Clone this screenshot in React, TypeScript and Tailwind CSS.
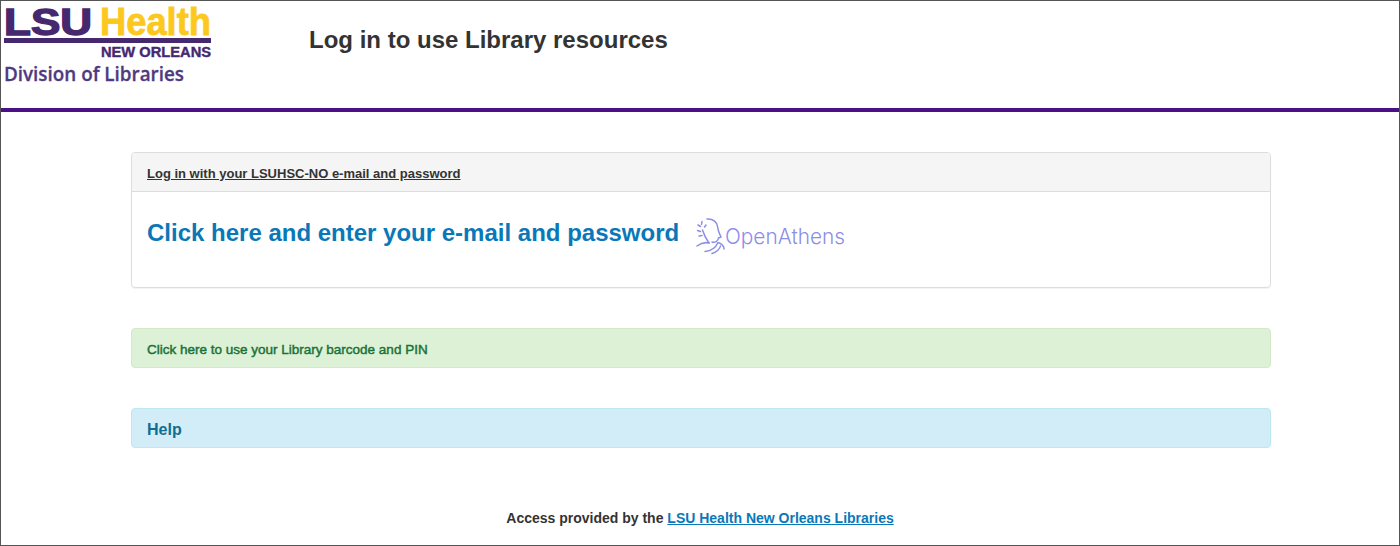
import React from 'react'

function LsuLogo() {
  return (
    <svg width="215" height="90" viewBox="0 0 215 90" className="block">
      <text x="3" y="33.5" fontFamily="'Liberation Sans', sans-serif" fontWeight="700" fontSize="36" fill="#46286f" stroke="#46286f" strokeWidth="1.4" textLength="88" lengthAdjust="spacingAndGlyphs">LSU</text>
      <text x="99" y="33.5" fontFamily="'Liberation Sans', sans-serif" fontWeight="700" fontSize="38" fill="#fdc81e" stroke="#fdc81e" strokeWidth="0.8" textLength="111" lengthAdjust="spacingAndGlyphs">Health</text>
      <rect x="3" y="37" width="207" height="5" fill="#46286f" />
      <text x="100" y="55.5" fontFamily="'Liberation Sans', sans-serif" fontWeight="700" fontSize="14.5" fill="#46286f" stroke="#46286f" strokeWidth="0.4" textLength="110" lengthAdjust="spacingAndGlyphs">NEW ORLEANS</text>
      <text x="3" y="80" fontFamily="'Open Sans', sans-serif" fontWeight="600" fontSize="20" fill="#4e3a80" stroke="#4e3a80" strokeWidth="0.3" textLength="180" lengthAdjust="spacingAndGlyphs">Division of Libraries</text>
    </svg>
  )
}

function OpenAthensLogo() {
  return (
    <svg width="175" height="40" viewBox="0 0 175 40" className="block">
      <g fill="none" stroke="#8b8ee8" strokeWidth="1.5" strokeLinecap="round" strokeLinejoin="round">
        {/* head */}
        <path d="M13 3C19 2.5 23 6 23.5 10.5C24 15 25.5 18 27 21L24.5 22C24 25 21.5 27 18 26" />
        {/* sprig */}
        <path d="M15 27C12 23 10 19 8.5 14" />
        <path d="M4 9l2.5 1.5M3.5 14.5l3 1M5 20l3-.5M8 5.5l-.5 3M12 9l-1.5 2" />
        {/* arm and drapery */}
        <path d="M3 30C7 27 11 26 15 27" />
        <path d="M11 35.5C18 35 22 31 24 26.5C27 27.5 30 30 30 33" />
        <path d="M18 37.5C22 36.5 26 33 26.5 30" />
      </g>
      <text x="31" y="28" fontFamily="Inter, sans-serif" fontWeight="300" fontSize="22" fill="#8b8ee8" textLength="120" lengthAdjust="spacingAndGlyphs">OpenAthens</text>
    </svg>
  )
}

export default function App() {
  return (
    <main className="h-[546px] overflow-hidden border border-[#555] bg-white font-['Liberation_Sans',Arial,sans-serif] text-[#333]">
      {/* header */}
      <header className="flex h-[111px] items-start border-b-4 border-[#4b0f86]">
        <div className="w-[308px] shrink-0">
          <LsuLogo />
        </div>
        <h1 className="mt-[24px] text-[24px] font-bold leading-[29px]">Log in to use Library resources</h1>
      </header>

      <div className="ml-[130px] mr-[128px] mt-[40px] flex flex-col gap-[40px]">
        {/* OpenAthens panel */}
        <section className="h-[136px] overflow-hidden rounded-[4px] border border-[#ddd] shadow-[0_1px_1px_rgba(0,0,0,0.05)]">
          <div className="flex h-[39px] items-center border-b border-[#ddd] bg-[#f5f5f5] px-[15px] pt-[3px]">
            <a className="text-[13px] font-bold text-[#333] underline">Log in with your LSUHSC-NO e-mail and password</a>
          </div>
          <div className="flex items-center px-[15px] pt-[18px]">
            <a className="text-[24px] font-bold leading-[38px] text-[#0a78b8]">Click here and enter your e-mail and password</a>
            <div className="ml-[15px] mt-[6px]">
              <OpenAthensLogo />
            </div>
          </div>
        </section>

        <a className="flex h-[40px] items-center rounded-[4px] border border-[#d6e9c6] bg-[#dcf1d6] px-[15px] pt-[4px] text-[13.5px] text-[#1a7237] [-webkit-text-stroke:0.45px_#1a7237]">
          Click here to use your Library barcode and PIN
        </a>

        <a className="flex h-[40px] items-center rounded-[4px] border border-[#bce8f1] bg-[#d3edf8] px-[15px] pt-[3px] text-[16px] font-bold text-[#0d6f93]">
          Help
        </a>
      </div>

      <footer className="mt-[60px] text-center text-[14px] font-bold leading-5 text-[#333]">
        Access provided by the <a className="text-[#0a78b8] underline">LSU Health New Orleans Libraries</a>
      </footer>
    </main>
  )
}
